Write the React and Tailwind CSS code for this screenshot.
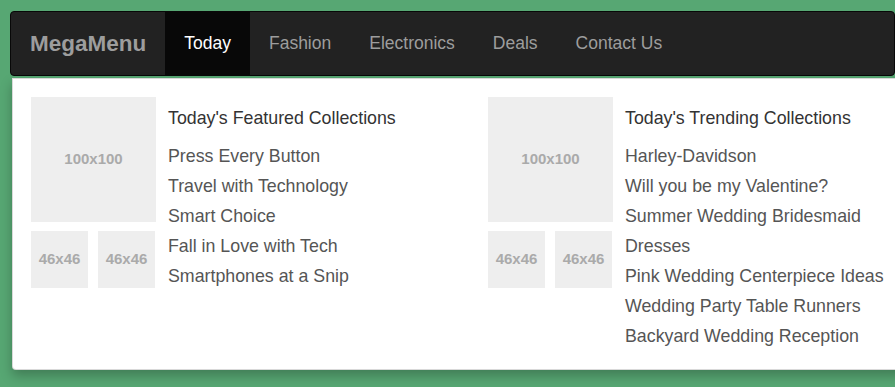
import React from 'react';

const navItems = ['Today', 'Fashion', 'Electronics', 'Deals', 'Contact Us'];

const featured = [
  'Press Every Button',
  'Travel with Technology',
  'Smart Choice',
  'Fall in Love with Tech',
  'Smartphones at a Snip',
];

const trending = [
  'Harley-Davidson',
  'Will you be my Valentine?',
  'Summer Wedding Bridesmaid Dresses',
  'Pink Wedding Centerpiece Ideas',
  'Wedding Party Table Runners',
  'Backyard Wedding Reception',
];

const Placeholder = ({ size, label }) => (
  <div
    className={`${size} bg-[#eeeeee] flex items-center justify-center text-[#aaaaaa] font-bold text-[15px]`}
  >
    {label}
  </div>
);

const Collection = ({ title, items }) => (
  <div className="flex w-[457px] shrink-0">
    <div className="w-[125px] shrink-0 flex flex-col gap-[9px]">
      <Placeholder size="w-[125px] h-[125px]" label="100x100" />
      <div className="flex gap-[10px]">
        <Placeholder size="w-[57px] h-[57px]" label="46x46" />
        <Placeholder size="w-[57px] h-[57px]" label="46x46" />
      </div>
    </div>
    <div className="ml-[12px] w-[262px] shrink-0">
      <h4 className="text-[17.8px] leading-[20px] text-[#333333] mt-[11px] mb-[13px]">{title}</h4>
      <ul>
        {items.map((item) => (
          <li key={item} className="text-[17.8px] leading-[30px] text-[#555555]">
            {item}
          </li>
        ))}
      </ul>
    </div>
  </div>
);

export default function App() {
  return (
    <div
      className="w-[895px] h-[387px] overflow-hidden bg-[#57a773] pt-[11px] pl-[10px]"
      style={{ fontFamily: '"Liberation Sans", Arial, sans-serif' }}
    >
      <nav className="h-[65px] bg-[#222222] border border-[#080808] rounded-[4px] flex items-stretch">
        <div className="pl-[19px] pr-[19px] flex items-center text-[22.5px] font-bold text-[#9d9d9d]">MegaMenu</div>
        {navItems.map((item, i) => (
          <div
            key={item}
            className={`px-[19px] flex items-center text-[17.5px] ${
              i === 0 ? 'bg-[#080808] text-white' : 'text-[#9d9d9d]'
            }`}
          >
            {item}
          </div>
        ))}
      </nav>
      <div className="mt-[2px] ml-[2px] w-[940px] bg-white border border-black/15 rounded-b-[4px] shadow-[0_6px_12px_rgba(0,0,0,0.25)] pt-[18px] pb-[18px] pl-[18px] flex">
        <Collection title="Today's Featured Collections" items={featured} />
        <Collection title="Today's Trending Collections" items={trending} />
      </div>
    </div>
  );
}
